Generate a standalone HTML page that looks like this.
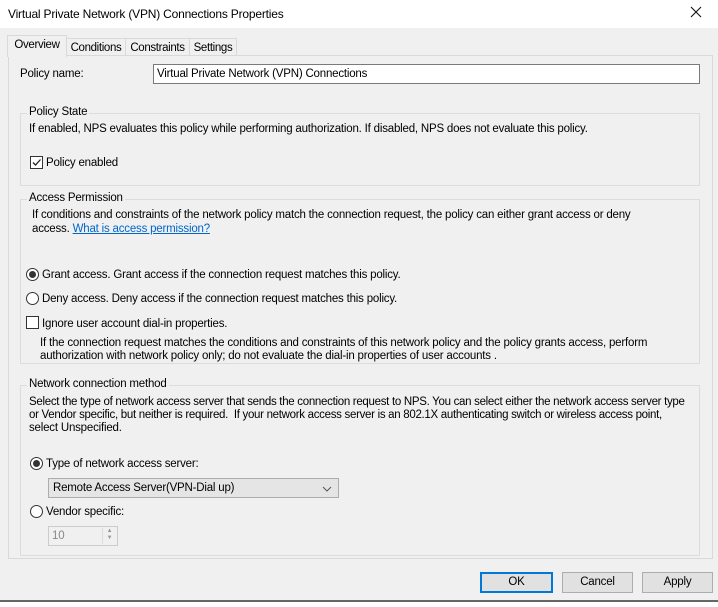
<!DOCTYPE html>
<html><head><meta charset="utf-8"><style>
*{box-sizing:border-box;margin:0;padding:0}
body{width:718px;height:607px;background:#f0f0f0;font-family:"Liberation Sans",sans-serif;font-size:11.5px;color:#000;position:relative;overflow:hidden;letter-spacing:-0.2px}
.a{position:absolute;white-space:nowrap}
.title{left:0;top:0;width:718px;height:28px;background:#fff}
.grp{position:absolute;border:1px solid #dcdcdc;}
.lg{position:absolute;background:#f0f0f0;padding:0 2px;top:-8px;left:6px;color:#000}
.rb{position:absolute;width:13px;height:13px;border:1px solid #333;border-radius:50%;background:#fff}
.rb.on::after{content:"";position:absolute;left:2px;top:2px;width:7px;height:7px;border-radius:50%;background:#333}
.cb{position:absolute;width:13px;height:13px;border:1px solid #333;background:#fff}
.btn{position:absolute;height:21px;background:#e1e1e1;border:1px solid #adadad;text-align:center;line-height:19px}
.tab{position:absolute;top:38px;height:18px;border:1px solid #d9d9d9;border-bottom:none;text-align:center;padding-top:3px;letter-spacing:-0.35px}
</style></head><body>
<div class="a title"></div>
<div class="a" style="left:8px;top:7px;font-size:12px">Virtual Private Network (VPN) Connections Properties</div>
<svg class="a" style="left:690px;top:6px" width="12" height="12"><path d="M1 1 L11 11 M11 1 L1 11" stroke="#111" stroke-width="1.1"/></svg>

<div class="a" style="left:8px;top:55px;width:705px;height:504px;border:1px solid #d9d9d9;background:#f0f0f0"></div>
<div class="tab" style="left:66px;width:60px">Conditions</div>
<div class="tab" style="left:125px;width:65px">Constraints</div>
<div class="tab" style="left:189px;width:48px">Settings</div>
<div class="tab" style="left:7px;top:35px;height:22px;width:60px;background:#f0f0f0">Overview</div>

<div class="a" style="left:20px;top:68px">Policy name:</div>
<div class="a" style="left:153px;top:64px;width:547px;height:20px;border:1px solid #7a7a7a;background:#fff;padding:3px 0 0 3px">Virtual Private Network (VPN) Connections</div>

<div class="grp" style="left:20px;top:113px;width:680px;height:73px">
<div class="lg">Policy State</div></div>
<div class="a" style="left:29px;top:123px">If enabled, NPS evaluates this policy while performing authorization. If disabled, NPS does not evaluate this policy.</div>
<div class="cb" style="left:30px;top:156px"><svg width="11" height="11" style="position:absolute;left:0;top:0"><path d="M2 5.5 L4.5 8 L9.5 2.5" stroke="#222" stroke-width="1.3" fill="none"/></svg></div>
<div class="a" style="left:46px;top:157px">Policy enabled</div>

<div class="grp" style="left:20px;top:199px;width:680px;height:165px">
<div class="lg">Access Permission</div></div>
<div class="a" style="left:32px;top:209px">If conditions and constraints of the network policy match the connection request, the policy can either grant access or deny</div>
<div class="a" style="left:32px;top:223px">access. <span style="color:#0066cc;text-decoration:underline">What is access permission?</span></div>
<div class="rb on" style="left:26px;top:268px"></div>
<div class="a" style="left:42px;top:269px">Grant access. Grant access if the connection request matches this policy.</div>
<div class="rb" style="left:26px;top:292px"></div>
<div class="a" style="left:42px;top:293px">Deny access. Deny access if the connection request matches this policy.</div>
<div class="cb" style="left:26px;top:316px"></div>
<div class="a" style="left:42px;top:318px">Ignore user account dial-in properties.</div>
<div class="a" style="left:40px;top:337px">If the connection request matches the conditions and constraints of this network policy and the policy grants access, perform</div>
<div class="a" style="left:40px;top:350px">authorization with network policy only; do not evaluate the dial-in properties of user accounts .</div>

<div class="grp" style="left:20px;top:385px;width:680px;height:171px">
<div class="lg">Network connection method</div></div>
<div class="a" style="left:29px;top:396px;letter-spacing:-0.3px">Select the type of network access server that sends the connection request to NPS. You can select either the network access server type</div>
<div class="a" style="left:29px;top:409px;letter-spacing:-0.3px">or Vendor specific, but neither is required.&nbsp; If your network access server is an 802.1X authenticating switch or wireless access point,</div>
<div class="a" style="left:29px;top:422px">select Unspecified.</div>
<div class="rb on" style="left:30px;top:457px"></div>
<div class="a" style="left:46px;top:458px">Type of network access server:</div>
<div class="a" style="left:48px;top:478px;width:291px;height:20px;background:#e5e5e5;border:1px solid #adadad;padding:3px 0 0 4px">Remote Access Server(VPN-Dial up)
<svg width="10" height="6" style="position:absolute;right:6px;top:7px"><path d="M1 1 L5 5 L9 1" stroke="#555" fill="none"/></svg></div>
<div class="rb" style="left:30px;top:505px"></div>
<div class="a" style="left:46px;top:506px">Vendor specific:</div>
<div class="a" style="left:48px;top:526px;width:70px;height:20px;border:1px solid #ccc;background:#f0f0f0;color:#888;padding:3px 0 0 3px">10
<div style="position:absolute;right:1px;top:1px;width:14px;height:16px;border-left:1px solid #ddd;font-size:6px;line-height:7px;text-align:center;color:#999">▲<br>▼</div></div>

<div class="btn" style="left:480px;top:572px;width:73px;border:2px solid #0078d7;line-height:17px">OK</div>
<div class="btn" style="left:562px;top:572px;width:71px">Cancel</div>
<div class="btn" style="left:642px;top:572px;width:71px">Apply</div>
<div class="a" style="left:0;top:600px;width:718px;height:2px;background:#666"></div>
<div class="a" style="left:0;top:602px;width:718px;height:5px;background:#fff"></div>
</body></html>
